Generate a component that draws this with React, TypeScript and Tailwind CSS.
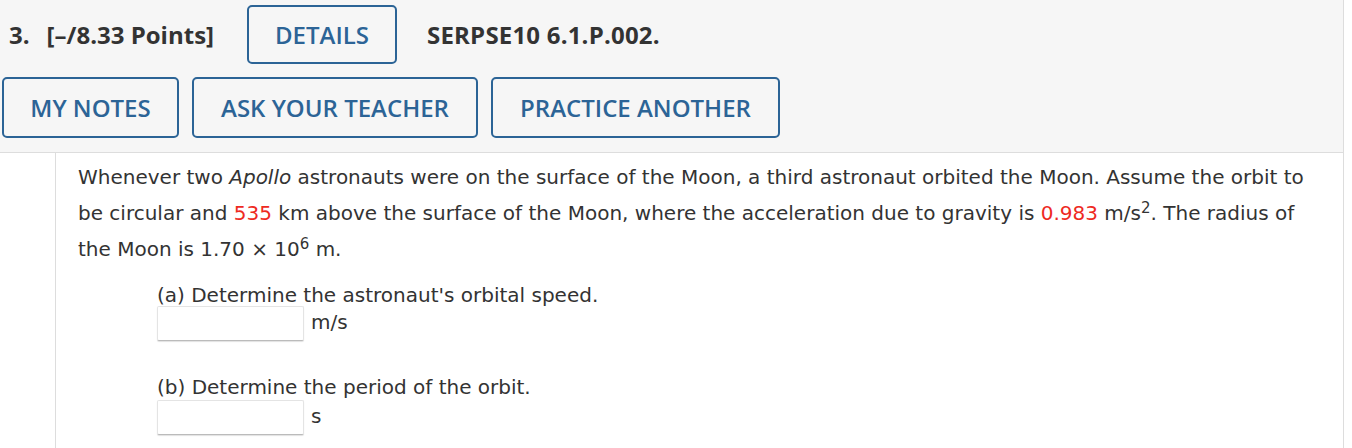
import React from "react";

const btn =
  "border-2 border-[#2c6496] rounded-[5px] text-[#2c6496] font-semibold text-[24px] flex items-center justify-center bg-[#f6f6f6]";

export default function App() {
  return (
    <div className="w-[1352px] h-[448px] bg-white overflow-hidden" style={{ fontFamily: "'Open Sans', sans-serif" }}>
      <div className="w-[1344px] h-[153px] bg-[#f6f6f6] border-b border-r border-[#dddddd]">
        <div className="flex items-center h-[68px] pt-[1px]">
          <span className="ml-[9px] font-bold text-[24px] text-[#333333]">3.</span>
          <span className="ml-[17px] font-bold text-[24px] text-[#333333]">[–/8.33 Points]</span>
          <div className={btn + " ml-[33px] w-[150px] h-[59px]"}>DETAILS</div>
          <span className="ml-[30px] font-bold text-[24px] text-[#333333] tracking-[0.2px]">SERPSE10 6.1.P.002.</span>
        </div>
        <div className="flex gap-[13px] ml-[2px] mt-[9px]">
          <div className={btn + " w-[177px] h-[61px]"}>MY NOTES</div>
          <div className={btn + " w-[286px] h-[61px]"}>ASK YOUR TEACHER</div>
          <div className={btn + " w-[289px] h-[61px]"}>PRACTICE ANOTHER</div>
        </div>
      </div>
      <div
        className="ml-[55px] w-[1289px] h-[295px] border-l border-r border-[#dddddd] text-[#333333] text-[20px]"
        style={{ fontFamily: "'DejaVu Sans', Verdana, sans-serif" }}
      >
        <div className="pl-[22px] pr-[30px] pt-[6px] leading-[36px]">
          Whenever two <i>Apollo</i> astronauts were on the surface of the Moon, a third astronaut orbited the Moon. Assume the orbit to
          be circular and <span className="text-[#ee2a1f]">535</span> km above the surface of the Moon, where the acceleration due to gravity is{" "}
          <span className="text-[#ee2a1f]">0.983</span> m/s<sup className="text-[15px]">2</sup>. The radius of the Moon is 1.70 × 10
          <sup className="text-[15px]">6</sup> m.
        </div>
        <div className="ml-[101px] mt-[17px]">
          <div className="leading-[22px]">(a) Determine the astronaut's orbital speed.</div>
          <div className="flex items-center mt-[0px]">
            <div className="w-[147px] h-[35px] bg-white border border-[#e4e4e4] border-b-[#bbbbbb] rounded-[2px] shadow-[0_1px_1px_rgba(0,0,0,0.12)]" />
            <span className="ml-[7px] -mt-[4px]">m/s</span>
          </div>
          <div className="leading-[22px] mt-[35px]">(b) Determine the period of the orbit.</div>
          <div className="flex items-center mt-[2px]">
            <div className="w-[147px] h-[35px] bg-white border border-[#e4e4e4] border-b-[#bbbbbb] rounded-[2px] shadow-[0_1px_1px_rgba(0,0,0,0.12)]" />
            <span className="ml-[7px] -mt-[4px]">s</span>
          </div>
        </div>
      </div>
    </div>
  );
}
